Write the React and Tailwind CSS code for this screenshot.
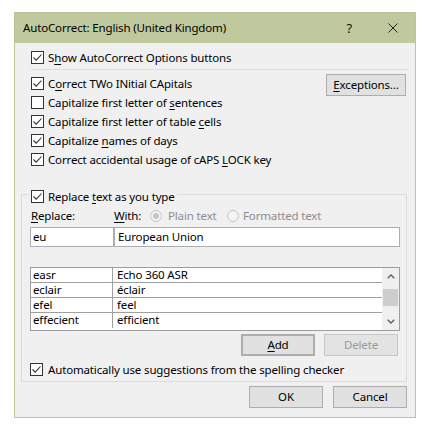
import React from "react";

function Check({ checked = true }) {
  return (
    <span className="w-[13px] h-[13px] border border-[#333333] bg-white flex items-center justify-center shrink-0">
      {checked && (
        <svg width="11" height="11" viewBox="0 0 11 11">
          <path d="M1.5 5.5 L4.2 8.2 L9.5 2.5" stroke="#333333" strokeWidth="1.1" fill="none" />
        </svg>
      )}
    </span>
  );
}

function CheckRow({ checked = true, children, className = "" }) {
  return (
    <div className={"flex items-center h-[19px] gap-[4px] " + className}>
      <Check checked={checked} />
      <span className="leading-[14px] whitespace-nowrap">{children}</span>
    </div>
  );
}

function U({ children }) {
  return <span className="underline underline-offset-[2px]">{children}</span>;
}

function Radio({ checked }) {
  return (
    <span className="w-[12px] h-[12px] rounded-full border border-[#c4c4c4] bg-[#f4f4f4] flex items-center justify-center shrink-0">
      {checked && <span className="w-[6px] h-[6px] rounded-full bg-[#c6c6c6]" />}
    </span>
  );
}

function Btn({ children, className = "" }) {
  return (
    <div
      className={
        "w-[74px] h-[22px] flex items-center justify-center bg-[#e1e1e1] border border-[#adadad] " +
        className
      }
    >
      {children}
    </div>
  );
}

const rows = [
  ["easr", "Echo 360 ASR"],
  ["eclair", "éclair"],
  ["efel", "feel"],
  ["effecient", "efficient"],
];

export default function App() {
  return (
    <div className="w-[432px] h-[424px] bg-white pt-[12px] pl-[14px] font-['Noto_Sans',sans-serif] text-[11.5px] tracking-[-0.15px] text-black">
      <div className="w-[402px] h-[406px] border border-[#bcc596] bg-[#f0f0f0] flex flex-col">
        {/* title bar */}
        <div className="h-[30px] bg-[#bfc99d] flex items-center pl-[8px] pr-[17px] shrink-0">
          <span className="text-[11.5px] leading-[16px] text-black whitespace-nowrap">
            AutoCorrect: English (United Kingdom)
          </span>
          <span className="ml-auto text-[13px] leading-[16px] text-[#111]">?</span>
          <svg className="ml-[36px]" width="10" height="10" viewBox="0 0 10 10">
            <path d="M0.5 0.5 L9.5 9.5 M9.5 0.5 L0.5 9.5" stroke="#222" strokeWidth="1" />
          </svg>
        </div>

        {/* body */}
        <div className="flex flex-col pl-[6px] pr-[8px]">
          <div className="pl-[10px]">
            <CheckRow className="mt-[5px]">
              S<U>h</U>ow AutoCorrect Options buttons
            </CheckRow>
            <div className="mt-[2px] h-px w-[377px] bg-[#dcdcdc]" />
            <div className="mt-[4px] flex w-[377px]">
              <div className="flex flex-col">
                <CheckRow>
                  C<U>o</U>rrect TWo INitial CApitals
                </CheckRow>
                <CheckRow checked={false}>
                  Capitalize first letter of <U>s</U>entences
                </CheckRow>
                <CheckRow>
                  Capitalize first letter of table <U>c</U>ells
                </CheckRow>
                <CheckRow>
                  Capitalize <U>n</U>ames of days
                </CheckRow>
                <CheckRow>
                  Correct accidental usage of cAPS <U>L</U>OCK key
                </CheckRow>
              </div>
              <Btn className="ml-auto mr-[2px] w-[80px]">
                <span>
                  <U>E</U>xceptions...
                </span>
              </Btn>
            </div>
          </div>

          <fieldset className="mt-[16px] w-[386px] border border-[#dcdcdc] pb-[2px]">
            <legend className="ml-[7px] px-[2px] h-[19px] pt-[5px]">
              <div className="flex items-center gap-[4px] h-[13px]">
                <Check />
                <span className="leading-[14px] whitespace-nowrap">
                  Replace <U>t</U>ext as you type
                </span>
              </div>
            </legend>

            <div className="mt-[2px] h-[19px] flex items-center pl-[9px] whitespace-nowrap">
              <span className="w-[83px]">
                <U>R</U>eplace:
              </span>
              <span className="w-[36px]">
                <U>W</U>ith:
              </span>
              <span className="w-[77px] flex items-center gap-[6px] text-[#8d8d8d]">
                <Radio checked />
                Plain text
              </span>
              <span className="flex items-center gap-[4px] text-[#8d8d8d]">
                <Radio />
                Formatted text
              </span>
            </div>

            <div className="mt-[2px] pl-[8px] flex">
              <div className="w-[84px] h-[20px] border border-[#abadb3] bg-white flex items-center pl-[2px]">
                eu
              </div>
              <div className="w-[286px] h-[20px] border border-[#abadb3] bg-white flex items-center pl-[3px]">
                European Union
              </div>
            </div>

            <div className="mt-[20px] ml-[8px] w-[370px] h-[64px] border border-[#9d9d9d] bg-white flex">
              <div className="flex-1 flex flex-col">
                {rows.map(([a, b], i) => (
                  <div
                    key={a}
                    className={
                      "flex h-[15px] leading-[13px] overflow-hidden " +
                      (i < 3 ? "border-b border-[#a0a0a0]" : "")
                    }
                  >
                    <span className="w-[82px] pl-[2px] border-r border-[#a0a0a0]">{a}</span>
                    <span className="pl-[4px]">{b}</span>
                  </div>
                ))}
              </div>
              <div className="w-[17px] bg-[#f0f0f0] flex flex-col">
                <div className="h-[17px] flex items-center justify-center">
                  <svg width="8" height="5" viewBox="0 0 8 5">
                    <path d="M0.7 4.3 L4 1 L7.3 4.3" stroke="#606060" strokeWidth="1.4" fill="none" />
                  </svg>
                </div>
                <div className="flex-1 pt-[4px]">
                  <div className="mx-[1px] h-[17px] bg-[#cdcdcd]" />
                </div>
                <div className="h-[17px] flex items-center justify-center">
                  <svg width="8" height="5" viewBox="0 0 8 5">
                    <path d="M0.7 0.7 L4 4 L7.3 0.7" stroke="#606060" strokeWidth="1.4" fill="none" />
                  </svg>
                </div>
              </div>
            </div>

            <div className="mt-[3px] flex justify-end gap-[9px] pr-[8px]">
              <Btn className="border-2 border-[#0078d7]">
                <span>
                  <U>A</U>dd
                </span>
              </Btn>
              <Btn className="bg-[#e3e3e3] border-[#c6c6c6] text-[#9a9a9a]">Delete</Btn>
            </div>

            <CheckRow className="mt-[4px] pl-[8px] gap-[5px]">
              Automatically use su<U>g</U>gestions from the spelling checker
            </CheckRow>
          </fieldset>

          <div className="mt-[4px] flex justify-end gap-[10px]">
            <Btn>OK</Btn>
            <Btn>Cancel</Btn>
          </div>
        </div>
      </div>
    </div>
  );
}
